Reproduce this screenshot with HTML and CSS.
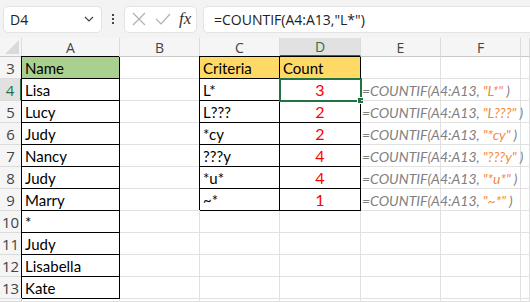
FILE: index.html
```html
<!DOCTYPE html>
<html lang="en">
<head>
  <meta charset="UTF-8">
  <title>COUNTIF wildcards</title>
  <link rel="stylesheet" href="styles.css">
</head>
<body>
  <!-- Formula bar -->
  <div class="formula-bar">
    <div class="name-box">
      <span>D4</span>
      <svg width="10" height="6" viewBox="0 0 10 6"><path d="M1 1 L5 5 L9 1" fill="none" stroke="#444" stroke-width="1.2"/></svg>
    </div>
    <div class="dots"><i></i><i></i><i></i></div>
    <div class="fx-box">
      <svg width="16" height="16" viewBox="0 0 16 16"><path d="M2 2 L14 14 M14 2 L2 14" stroke="#b0b0b0" stroke-width="1.2"/></svg>
      <svg width="16" height="16" viewBox="0 0 16 16"><path d="M1 8 L6 13 L15 3" fill="none" stroke="#b0b0b0" stroke-width="1.2"/></svg>
      <span class="fx">fx</span>
    </div>
    <div class="formula-input">=COUNTIF(A4:A13,"L*")</div>
  </div>

  <!-- Sheet -->
  <div class="sheet">
    <div class="hd corner"><svg width="14" height="14" viewBox="0 0 14 14"><path d="M14 0 L14 14 L0 14 Z" fill="#dadada"/></svg></div>
    <div class="hd">A</div>
    <div class="hd">B</div>
    <div class="hd">C</div>
    <div class="hd sel-col">D</div>
    <div class="hd">E</div>
    <div class="hd">F</div>
    <div class="hd"></div>

    <div class="rh">3</div>
    <div class="c t green">Name</div>
    <div class="c"></div>
    <div class="c t orange">Criteria</div>
    <div class="c t orange">Count</div>
    <div class="c"></div>
    <div class="c"></div>
    <div class="c"></div>

    <div class="rh sel-row">4</div>
    <div class="c t">Lisa</div>
    <div class="c"></div>
    <div class="c t">L*</div>
    <div class="c t num active">3<span class="handle"></span></div>
    <div class="c f">=COUNTIF(A4:A13, <b>"L*"</b><span class="paren">)</span></div>
    <div class="c"></div>
    <div class="c"></div>

    <div class="rh">5</div>
    <div class="c t">Lucy</div>
    <div class="c"></div>
    <div class="c t">L???</div>
    <div class="c t num">2</div>
    <div class="c f">=COUNTIF(A4:A13, <b>"L???"</b><span class="paren">)</span></div>
    <div class="c"></div>
    <div class="c"></div>

    <div class="rh">6</div>
    <div class="c t">Judy</div>
    <div class="c"></div>
    <div class="c t">*cy</div>
    <div class="c t num">2</div>
    <div class="c f">=COUNTIF(A4:A13, <b>"*cy"</b><span class="paren">)</span></div>
    <div class="c"></div>
    <div class="c"></div>

    <div class="rh">7</div>
    <div class="c t">Nancy</div>
    <div class="c"></div>
    <div class="c t">???y</div>
    <div class="c t num">4</div>
    <div class="c f">=COUNTIF(A4:A13, <b>"???y"</b><span class="paren">)</span></div>
    <div class="c"></div>
    <div class="c"></div>

    <div class="rh">8</div>
    <div class="c t">Judy</div>
    <div class="c"></div>
    <div class="c t">*u*</div>
    <div class="c t num">4</div>
    <div class="c f">=COUNTIF(A4:A13, <b>"*u*"</b><span class="paren">)</span></div>
    <div class="c"></div>
    <div class="c"></div>

    <div class="rh">9</div>
    <div class="c t">Marry</div>
    <div class="c"></div>
    <div class="c t">~*</div>
    <div class="c t num">1</div>
    <div class="c f">=COUNTIF(A4:A13, <b>"~*"</b><span class="paren">)</span></div>
    <div class="c"></div>
    <div class="c"></div>

    <div class="rh">10</div>
    <div class="c t">*</div>
    <div class="c"></div>
    <div class="c"></div>
    <div class="c"></div>
    <div class="c"></div>
    <div class="c"></div>
    <div class="c"></div>

    <div class="rh">11</div>
    <div class="c t">Judy</div>
    <div class="c"></div>
    <div class="c"></div>
    <div class="c"></div>
    <div class="c"></div>
    <div class="c"></div>
    <div class="c"></div>

    <div class="rh">12</div>
    <div class="c t">Lisabella</div>
    <div class="c"></div>
    <div class="c"></div>
    <div class="c"></div>
    <div class="c"></div>
    <div class="c"></div>
    <div class="c"></div>

    <div class="rh">13</div>
    <div class="c t">Kate</div>
    <div class="c"></div>
    <div class="c"></div>
    <div class="c"></div>
    <div class="c"></div>
    <div class="c"></div>
    <div class="c"></div>

    <div class="rh"></div>
    <div class="c"></div>
    <div class="c"></div>
    <div class="c"></div>
    <div class="c"></div>
    <div class="c"></div>
    <div class="c"></div>
    <div class="c"></div>
  </div>
</body>
</html>
```

FILE: styles.css
```css
body {
  margin: 0;
  width: 530px;
  height: 302px;
  overflow: hidden;
  background: #fff;
  font-family: "Open Sans", "Noto Sans", sans-serif;
}

/* Formula bar */
.formula-bar {
  height: 38px;
  background: #f3f3f3;
  display: flex;
  align-items: center;
  padding-left: 3px;
  box-sizing: border-box;
}

.name-box {
  width: 99px;
  height: 27px;
  box-sizing: border-box;
  background: #fff;
  border: 1px solid #e3e3e3;
  border-radius: 5px;
  display: flex;
  align-items: center;
  justify-content: space-between;
  padding: 0 7px 0 6px;
  font-size: 14px;
  color: #222;
}

.dots {
  width: 22px;
  display: flex;
  flex-direction: column;
  align-items: center;
  gap: 2px;
}

.dots i {
  width: 2px;
  height: 2px;
  background: #444;
}

.fx-box {
  width: 73px;
  height: 27px;
  box-sizing: border-box;
  background: #fff;
  border: 1px solid #e3e3e3;
  border-radius: 5px;
  display: flex;
  align-items: center;
  gap: 8px;
  padding-left: 6px;
}

.fx {
  font-family: "Liberation Serif", serif;
  font-style: italic;
  font-size: 17px;
  color: #333;
}

.formula-input {
  flex: 1;
  height: 27px;
  margin-left: 6px;
  box-sizing: border-box;
  background: #fff;
  border: 1px solid #e3e3e3;
  border-radius: 5px 0 0 5px;
  border-right: none;
  display: flex;
  align-items: center;
  padding-left: 10px;
  font-size: 14px;
  color: #222;
}

/* Sheet grid */
.sheet {
  display: grid;
  grid-template-columns: 22px 98px 80px 80px 81px 80px 80px 9px;
  grid-template-rows: 19px repeat(11, 22px) 3px;
  font-family: Lato, "Liberation Sans", sans-serif;
}

.hd {
  background: #f5f5f5;
  border-right: 1px solid #dcdcdc;
  border-bottom: 1px solid #c8c8c8;
  font-family: "Open Sans", "Noto Sans", sans-serif;
  font-size: 14px;
  color: #444;
  display: flex;
  align-items: center;
  justify-content: center;
}

.corner {
  align-items: flex-end;
  justify-content: flex-end;
  padding: 0 2px 2px 0;
  box-sizing: border-box;
}

.sel-col {
  background: #e1e1e1;
  color: #217346;
  border-bottom: 2px solid #217346;
}

.rh {
  background: #f5f5f5;
  border-right: 1px solid #c8c8c8;
  border-bottom: 1px solid #dcdcdc;
  font-family: "Open Sans", "Noto Sans", sans-serif;
  font-size: 15px;
  color: #444;
  display: flex;
  align-items: center;
  justify-content: center;
}

.sel-row {
  background: #e1e1e1;
  color: #217346;
  border-right: 2px solid #217346;
}

.c {
  position: relative;
  border-right: 1px solid #e1e1e1;
  border-bottom: 1px solid #e1e1e1;
  font-size: 15px;
  color: #000;
  padding: 0 3px 1px;
  display: flex;
  align-items: flex-end;
  white-space: nowrap;
  min-width: 0;
}

.t {
  border-color: #000;
  box-shadow: -1px -1px 0 #000;
}

.green {
  background: #a9d08e;
}

.orange {
  background: #ffd966;
}

.num {
  justify-content: center;
  color: #ff0000;
  font-size: 16px;
}

.active {
  outline: 2px solid #217346;
  outline-offset: -1px;
  z-index: 1;
}

.handle {
  position: absolute;
  right: -4px;
  bottom: -4px;
  width: 5px;
  height: 5px;
  background: #217346;
  border: 1px solid #fff;
}

.f {
  overflow: visible;
  font-style: italic;
  font-size: 14px;
  color: #808080;
  padding-left: 1px;
  z-index: 2;
}

.f b {
  font-weight: normal;
  color: #f28b46;
  margin-left: 3px;
}

.paren {
  margin-left: 3px;
}
```
